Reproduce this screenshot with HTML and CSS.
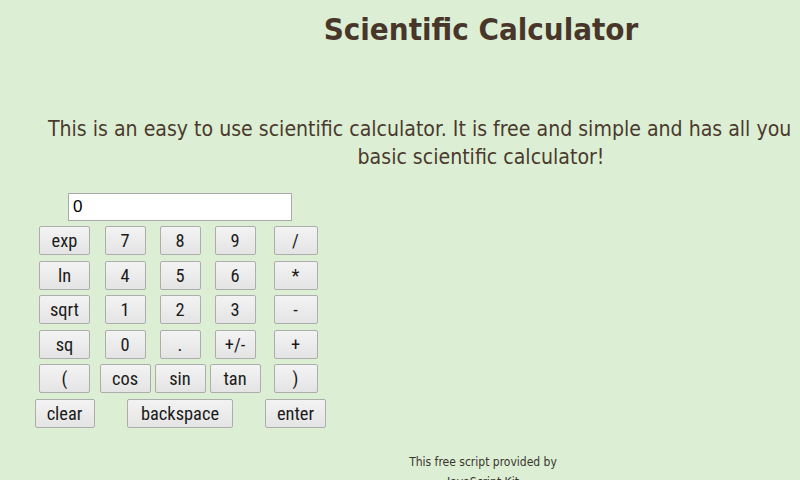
FILE: index.html
```
<!DOCTYPE html>
<html lang="en">
<head>
    <meta charset="UTF-8">
    <title>Scientific Calculator</title>
    <link rel="stylesheet" href="styles.css">
</head>
<body>
    <div class="page">
        <h1 class="title">Scientific Calculator</h1>
        <p class="intro">This is an easy to use scientific calculator. It is free and simple and has all you need for the<br>basic scientific calculator!</p>

        <!-- Calculator keypad -->
        <form class="calc" name="sci-calc">
            <input class="display" name="display" value="0">

            <button type="button" class="key fn">exp</button>
            <button type="button" class="key">7</button>
            <button type="button" class="key">8</button>
            <button type="button" class="key">9</button>
            <button type="button" class="key op">/</button>

            <button type="button" class="key fn">ln</button>
            <button type="button" class="key">4</button>
            <button type="button" class="key">5</button>
            <button type="button" class="key">6</button>
            <button type="button" class="key op">*</button>

            <button type="button" class="key fn">sqrt</button>
            <button type="button" class="key">1</button>
            <button type="button" class="key">2</button>
            <button type="button" class="key">3</button>
            <button type="button" class="key op">-</button>

            <button type="button" class="key fn">sq</button>
            <button type="button" class="key">0</button>
            <button type="button" class="key">.</button>
            <button type="button" class="key">+/-</button>
            <button type="button" class="key op">+</button>

            <button type="button" class="key fn">(</button>
            <button type="button" class="key trig">cos</button>
            <button type="button" class="key trig">sin</button>
            <button type="button" class="key trig">tan</button>
            <button type="button" class="key op">)</button>

            <button type="button" class="key clear">clear</button>
            <button type="button" class="key backspace">backspace</button>
            <button type="button" class="key enter">enter</button>
        </form>

        <p class="credit">This free script provided by<br><a href="#">JavaScript Kit</a></p>
    </div>
</body>
</html>
```
FILE: styles.css
```
html {
    overflow: hidden;
}

body {
    margin: 8px;
    background-color: #dcefd4;
    color: #4b3a2e;
    font-family: "DejaVu Sans Condensed", "DejaVu Sans", sans-serif;
}

.page {
    width: 946px;
}

.title {
    margin: 3px 0 0;
    font-size: 31px;
    line-height: 36px;
    font-weight: bold;
    text-align: center;
    color: #49362a;
}

.intro {
    margin: 68px 0 0;
    font-size: 21.1px;
    line-height: 28px;
    text-align: center;
}

.calc {
    display: grid;
    grid-template-columns: 66px 55px 55px 55px 66px;
    grid-template-rows: 28px;
    grid-auto-rows: 29px;
    row-gap: 5.5px;
    justify-items: center;
    width: max-content;
    margin: 21.5px 0 0 23.5px;
}

.display {
    grid-column: 1 / -1;
    box-sizing: border-box;
    width: 224px;
    height: 28px;
    padding: 0 4px;
    border: 1px solid #a9a9a9;
    background: white;
    font-family: "Liberation Sans", Arial, sans-serif;
    font-size: 17px;
    color: #000;
}

.key {
    box-sizing: border-box;
    width: 41px;
    height: 29px;
    padding: 0;
    border: 1px solid #adadad;
    border-radius: 2px;
    background: linear-gradient(#f3f3f3, #e4e4e4);
    font-family: "Roboto Condensed", "Liberation Sans", sans-serif;
    font-size: 18.4px;
    color: #1b1b1b;
    cursor: pointer;
}

.key:hover {
    background: linear-gradient(#eaf6fd, #d9f0fc);
    border-color: #3c7fb1;
}

.fn, .trig {
    width: 51px;
}

.op {
    width: 44px;
}

.clear {
    width: 60px;
}

.backspace {
    grid-column: 2 / 5;
    width: 106px;
}

.enter {
    width: 61px;
}

.credit {
    margin: 24px 0 0;
    padding-left: 4px;
    font-size: 12px;
    line-height: 20px;
    text-align: center;
    color: #3b3530;
}

.credit a {
    color: inherit;
    text-decoration: none;
}
```
